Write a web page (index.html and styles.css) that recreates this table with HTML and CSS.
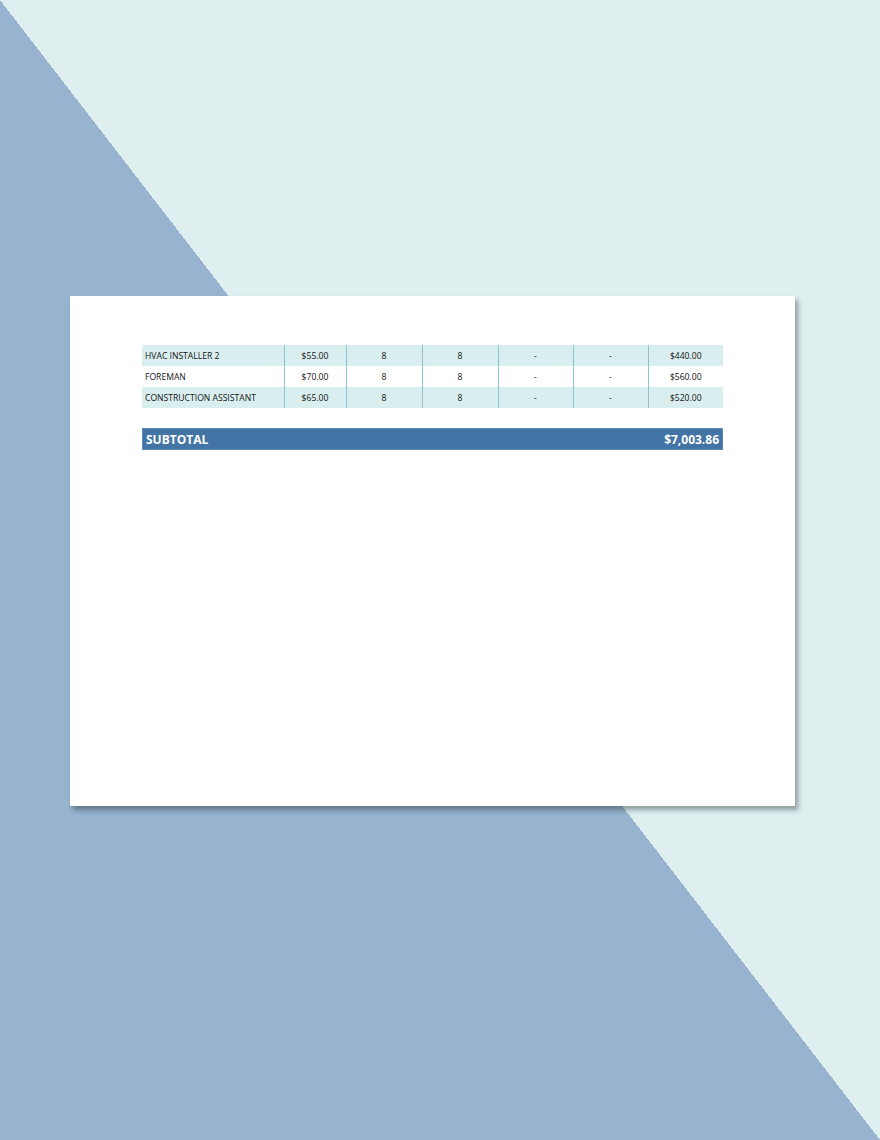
FILE: index.html
```html
<!DOCTYPE html>
<html>
<head>
<meta charset="utf-8">
<link rel="stylesheet" href="styles.css">
</head>
<body>
<div class="scene">
  <div class="paper">
    <table class="rates">
      <colgroup>
        <col class="c1"><col class="c2"><col class="c3"><col class="c4"><col class="c5"><col class="c6"><col class="c7">
      </colgroup>
      <tr class="tint">
        <td class="name">HVAC INSTALLER 2</td><td>$55.00</td><td>8</td><td>8</td><td>-</td><td>-</td><td>$440.00</td>
      </tr>
      <tr>
        <td class="name">FOREMAN</td><td>$70.00</td><td>8</td><td>8</td><td>-</td><td>-</td><td>$560.00</td>
      </tr>
      <tr class="tint">
        <td class="name">CONSTRUCTION ASSISTANT</td><td>$65.00</td><td>8</td><td>8</td><td>-</td><td>-</td><td>$520.00</td>
      </tr>
    </table>
    <div class="subtotal">
      <span>SUBTOTAL</span>
      <span>$7,003.86</span>
    </div>
  </div>
</div>
</body>
</html>
```

FILE: styles.css
```css
html, body {
  margin: 0;
  padding: 0;
}
body {
  width: 880px;
  height: 1140px;
  overflow: hidden;
  font-family: "Open Sans", "Liberation Sans", sans-serif;
}
.scene {
  width: 880px;
  height: 1140px;
  box-sizing: border-box;
  padding: 296px 0 0 70px;
  background: linear-gradient(to top right, #97b3cf 50%, #dfeff0 50%);
}
.paper {
  width: 725px;
  height: 510px;
  box-sizing: border-box;
  padding: 49px 0 0 72px;
  background: #ffffff;
  box-shadow: 3px 4px 5px rgba(40, 50, 55, 0.45);
}
.rates {
  width: 581px;
  border-collapse: collapse;
  table-layout: fixed;
}
.c1 { width: 142px; }
.c2 { width: 62px; }
.c3 { width: 76px; }
.c4 { width: 76px; }
.c5 { width: 75px; }
.c6 { width: 75px; }
.c7 { width: 75px; }
.rates td {
  height: 21px;
  padding: 0;
  font-size: 8.6px;
  color: #141414;
  text-align: center;
  border-left: 1.5px solid #8dc3d7;
  white-space: nowrap;
}
.rates td:first-child {
  border-left: none;
}
.rates td.name {
  text-align: left;
  padding-left: 3px;
}
.rates tr.tint td {
  background: #d9eeee;
}
.subtotal {
  width: 581px;
  height: 22px;
  box-sizing: border-box;
  margin-top: 20px;
  padding: 0 3px;
  display: flex;
  align-items: center;
  justify-content: space-between;
  background: #4274a5;
  border: 1px solid #5d8ab5;
  color: #ffffff;
  font-weight: 700;
  font-size: 12px;
}
```
